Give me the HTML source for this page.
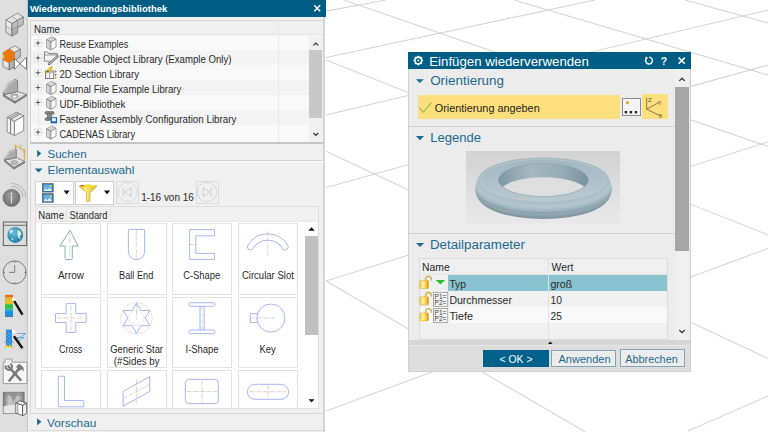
<!DOCTYPE html>
<html><head><meta charset="utf-8">
<style>
*{box-sizing:border-box;margin:0;padding:0}
html,body{width:768px;height:432px;overflow:hidden;background:#fff;font-family:"Liberation Sans",sans-serif;color:#333}
.a{position:absolute}
svg{position:absolute;left:0;top:0}
text{font-family:"Liberation Sans",sans-serif}
</style></head><body>
<!-- background grid -->
<svg width="768" height="432">
<g stroke="#d6d6d6" stroke-width="1.1" fill="none">
<line x1="326" y1="11.1" x2="386" y2="0"/>
<line x1="326" y1="57.5" x2="595" y2="0"/>
<line x1="326" y1="115" x2="768" y2="10"/>
<line x1="326" y1="187.5" x2="768" y2="65"/>
<line x1="326" y1="281" x2="768" y2="142"/>
<line x1="326" y1="411" x2="768" y2="248.5"/>
<line x1="688" y1="431" x2="768" y2="396"/>
<line x1="685" y1="0" x2="768" y2="23"/>
<line x1="514" y1="0" x2="768" y2="75"/>
<line x1="344" y1="0" x2="768" y2="146.5"/>
<line x1="326" y1="60" x2="768" y2="234.8"/>
<line x1="326" y1="151.2" x2="768" y2="358.6"/>
<line x1="326" y1="281" x2="585.5" y2="432"/>
</g></svg>

<!-- left toolbar -->
<div class="a" style="left:0;top:0;width:28px;height:432px;background:#dedede;border-right:1px solid #c6c6c6"></div>

<!-- TOOLBAR ICONS -->
<svg width="30" height="432">
<defs>
<linearGradient id="gface" x1="0" y1="0" x2="0" y2="1"><stop offset="0" stop-color="#f4f4f4"/><stop offset="1" stop-color="#d4d4d4"/></linearGradient>
<linearGradient id="gside" x1="0" y1="0" x2="0" y2="1"><stop offset="0" stop-color="#c8c8c8"/><stop offset="1" stop-color="#a8a8a8"/></linearGradient>
<radialGradient id="ginfo" cx="0.45" cy="0.4" r="0.6"><stop offset="0" stop-color="#a0a0a0"/><stop offset="1" stop-color="#6e6e6e"/></radialGradient>
<radialGradient id="gglobe" cx="0.4" cy="0.35" r="0.7"><stop offset="0" stop-color="#6cc0dc"/><stop offset="1" stop-color="#1f7a9c"/></radialGradient>
<linearGradient id="gstudio" x1="0" y1="0" x2="1" y2="0"><stop offset="0" stop-color="#7a7a7a"/><stop offset="0.3" stop-color="#c8c8c8"/><stop offset="0.5" stop-color="#b8b8b8"/><stop offset="0.7" stop-color="#c8c8c8"/><stop offset="1" stop-color="#7a7a7a"/></linearGradient>
</defs>
<g stroke="#6a6a6a" stroke-width="0.7" stroke-linejoin="round">
<!-- icon1 L blocks -->
<path d="M5.9 19.9 L17.4 13.2 L23.3 16.9 L11.9 23.6 Z" fill="#e6e6e6"/>
<path d="M5.9 19.9 L11.9 23.6 V36.1 L5.9 32.4 Z" fill="url(#gface)"/>
<path d="M11.9 23.6 L23.3 16.9 V24.4 L17.6 27.7 V32.8 L11.9 36.1 Z" fill="url(#gside)"/>
<path d="M11.6 16.6 L17.6 20.3 V27.7 M5.9 26.2 L11.9 29.9 L17.6 26.6" fill="none" stroke="#7a7a7a" stroke-width="0.55"/>
<!-- icon2 -->
<path d="M9 49 L14.6 45.7 L20.3 49.2 L14.6 52.6 Z" fill="#e6e6e6"/>
<path d="M14.6 52.6 L20.3 49.2 V57 L14.6 60.4 V67 L9 70 V62.5 Z" fill="url(#gside)"/>
<path d="M3 59.5 L9 62.5 V69.8 L3 66.5 Z" fill="url(#gface)"/>
<path d="M3 52.5 L9 49 L14.6 52.5 V59.5 L9 62.7 L3 59.5 Z" fill="#e87810" stroke="#d87010" stroke-width="0.5"/>
<path d="M3.8 55 V58" stroke="#f8e020" stroke-width="1"/>
<path d="M14.3 58.6 L26.5 69.4 V57.2 L14.3 69.4 Z" fill="#fff" stroke="#555" stroke-width="0.8"/>
<!-- icon3 bracket -->
<path d="M3.3 94.8 L17.6 91.6 L26.5 94.4 L15 101.6 Z" fill="#e2e2e2"/>
<path d="M3.3 94.8 V96.3 L15 103.2 V101.6 Z M15 101.6 V103.2 L26.5 96 V94.4 Z" fill="#9a9a9a"/>
<path d="M3.3 94.8 L3.3 92.2 L8.4 83.4 L15.3 79.2 L17.6 80.6 V91.6 Z" fill="#acacac"/>
<path d="M3.8 92 L8.6 84 L14.6 80.3" fill="none" stroke="#e8e8e8" stroke-width="0.9"/>
<ellipse cx="14.6" cy="96.2" rx="3.6" ry="2.1" fill="#c0c0c0" stroke="#7a7a7a" stroke-width="0.6"/>
<ellipse cx="14.6" cy="96.9" rx="2" ry="1.1" fill="#eeeeee" stroke="none"/>
<!-- icon4 books -->
<path d="M7.2 117.3 L16.3 112.1 L23.7 115.8 L14.4 121.4 Z" fill="#e8e8e8"/>
<path d="M7.2 117.3 L14.4 121.4 V135.4 L7.2 132 Z" fill="#f2f2f2"/>
<path d="M14.4 121.4 L23.7 115.8 V130.6 L14.4 135.4 Z" fill="#fafafa"/>
<path d="M10.6 119.4 V133.8 M10.6 119.4 L19.8 114 M8.9 118.3 L18 113" fill="none" stroke="#6a6a6a" stroke-width="0.9"/>
<!-- icon5 bracket + dims -->
<path d="M4.5 160.2 L16.3 157.6 L24.6 161.4 L14 167.6 Z" fill="#e2e2e2"/>
<path d="M4.5 160.2 V161.6 L14 169.1 V167.6 Z M14 167.6 V169.1 L24.6 162.9 V161.4 Z" fill="#9a9a9a"/>
<path d="M4.5 160.2 V158.4 L9.8 151 L15.5 148.9 L16.3 149.4 V157.6 Z" fill="#acacac"/>
<path d="M5 158.2 L10 151.4 L15 149.5" fill="none" stroke="#e8e8e8" stroke-width="0.9"/>
<ellipse cx="14.4" cy="162.6" rx="3.4" ry="1.9" fill="#c0c0c0" stroke="#7a7a7a" stroke-width="0.6"/>
</g>
<g stroke="#e0a020" stroke-width="0.9" fill="none">
<path d="M15.5 145 V149 M15.5 146.2 L24.3 150.2 M24.3 149.5 V160.5"/>
<path d="M14.5 144.5 L16.5 146.5 M16.5 144.5 L14.5 146.5 M19.5 145.2 L21.5 147.2 M21.5 145.2 L19.5 147.2 M23.2 150.5 L25.2 152.5 M25.2 150.5 L23.2 152.5" stroke-width="0.7"/>
</g>
<!-- icon6 info -->
<circle cx="11.5" cy="197.8" r="8.6" fill="url(#ginfo)" stroke="#666" stroke-width="0.5"/>
<circle cx="11.5" cy="193.4" r="0.9" fill="#eee"/>
<path d="M11.5 195.6 V203.6" stroke="#e4e4e4" stroke-width="1.1"/>
<path d="M11.6 186.2 A11.6 11.6 0 0 1 23.1 197.2 M11.6 183.3 A14.5 14.5 0 0 1 26 197.5" fill="none" stroke="#a4a4a4" stroke-width="0.8"/>
<!-- icon7 globe window -->
<rect x="3.3" y="222" width="23.4" height="23.6" fill="#dcdcdc" stroke="#555" stroke-width="0.9"/>
<path d="M3.3 225.3 H26.7" stroke="#555" stroke-width="0.8"/>
<circle cx="15.2" cy="235" r="7.9" fill="url(#gglobe)"/>
<path d="M9.5 231 L12 229.5 L13 231 L10.5 234 Z M17.5 230 L20.5 231.5 L21.5 234.5 L19.5 236 L21 239 L18.5 238 L17.5 235 Z M11 238 L13.5 239 L12.5 240.5 Z" fill="#fff" opacity="0.85"/>
<!-- icon8 clock -->
<circle cx="14.7" cy="272.4" r="11.5" fill="none" stroke="#707070" stroke-width="0.9"/>
<path d="M14.7 260.9 V262.8 M14.7 282 V283.9 M3.2 272.4 H5.1 M24.3 272.4 H26.2 M14.7 265 V272.4 H9.3" fill="none" stroke="#707070" stroke-width="0.9"/>
<!-- icon9 color bar -->
<rect x="5" y="294.8" width="8" height="3" fill="#e87020"/>
<rect x="5" y="297.6" width="8" height="6.6" fill="#e8c020"/>
<rect x="5" y="304.2" width="8" height="4.4" fill="#30c040"/>
<rect x="5" y="308.6" width="8" height="2.2" fill="#20b098"/>
<rect x="5" y="310.8" width="8" height="4.6" fill="#1a90e0"/>
<rect x="5" y="315.4" width="8" height="1.4" fill="#1060a0"/>
<path d="M14.5 301.5 L22.3 314.3" stroke="#111" stroke-width="2.4" stroke-linecap="round"/>
<circle cx="13.6" cy="299.4" r="1.8" fill="#fff" opacity="0.9"/>
<circle cx="22.8" cy="315" r="0.8" fill="#fff"/>
<!-- icon10 -->
<path d="M17 333.5 H26 M16.5 337.5 H24 L17 342 M26 333.5 L17 339" stroke="#4aa0e0" stroke-width="0.8" fill="none"/>
<path d="M4 343 L6 341 M12 341 L14 343" stroke="#4aa0e0" stroke-width="0.8"/>
<rect x="5.9" y="329.6" width="6" height="16.6" fill="#2a88dd"/>
<path d="M6.5 331 L11 335 M6.5 334.5 L11 338.5 M6.5 338 L11 342 M6.5 341.5 L11 345.5" stroke="#8cc4f0" stroke-width="0.6"/>
<path d="M5 347.8 L6.5 345.5 L8.5 347 L10 345.5 L12 347.5 L13 346" stroke="#e8c820" stroke-width="1.3" fill="none"/>
<path d="M14.5 337 L22.3 348" stroke="#111" stroke-width="2.4" stroke-linecap="round"/>
<circle cx="13.6" cy="331.5" r="1.8" fill="#fff" opacity="0.9"/>
<circle cx="22.7" cy="348.5" r="0.8" fill="#fff"/>
<!-- icon11 tools -->
<path d="M3.2 383.6 V362.3 H5.2 V359.1 H11.9 V362.3 H27 V383.6 Z" fill="#f6f6f6" stroke="#8a8a8a" stroke-width="0.8"/>
<path d="M8.5 366.5 L20.5 379.8" stroke="#7a7a7a" stroke-width="2.6" stroke-linecap="round"/>
<path d="M5.8 365.5 A3.2 3.2 0 1 0 10.2 363.8" fill="none" stroke="#7a7a7a" stroke-width="1.8"/>
<path d="M9.5 380.5 L19 368.5" stroke="#7a7a7a" stroke-width="2.6" stroke-linecap="round"/>
<path d="M16 366.8 L19.3 363.8 L23.5 367.5 L23.8 371.5 L21.8 369.3 L19.5 371 Z" fill="#7a7a7a"/>
<!-- icon12 studio -->
<rect x="3.2" y="392.2" width="20.9" height="21.4" fill="url(#gstudio)" stroke="#6a6a6a" stroke-width="0.7"/>
<path d="M3.6 392.6 H23.7 V396 H3.6 Z" fill="#808080" opacity="0.45"/>
<path d="M8.5 392.6 L13.6 401.5 L18.8 392.6 Z" fill="#8c8c8c" opacity="0.75"/>
<path d="M3.6 406.5 Q8 404.5 13.6 404.8 Q19 404.5 23.7 406.5 V413.2 H3.6 Z" fill="#e6e6e6"/>
<path d="M15.8 402.8 L19.8 400.8 L26.7 403.2 L22.6 405.4 Z" fill="#f4f4f4" stroke="#444" stroke-width="0.75" stroke-linejoin="round"/>
<path d="M15.8 402.8 L22.6 405.4 V415.6 L15.8 413 Z" fill="#fdfdfd" stroke="#444" stroke-width="0.75" stroke-linejoin="round"/>
<path d="M22.6 405.4 L26.7 403.2 V413.4 L22.6 415.6 Z" fill="#f0f0f0" stroke="#444" stroke-width="0.75" stroke-linejoin="round"/>
<path d="M17.8 403.6 V413.8" stroke="#555" stroke-width="0.6"/>
</svg>

<!-- /TOOLBAR ICONS -->
<!-- left panel -->
<div class="a" style="left:28px;top:0;width:297px;height:432px;background:#f0f0f0;border-right:2px solid #d4d4d4"></div>
<div class="a" style="left:28px;top:0;width:298px;height:17.4px;background:#005e85"></div>

<!-- tree -->
<div class="a" style="left:30px;top:19.8px;width:294px;height:124.4px;background:#f9f9f9;border:1px solid #d4d4d4;border-bottom:2.2px solid #c4c4c4"></div>
<div class="a" style="left:31px;top:20.8px;width:292px;height:14.7px;background:#efefef;border-bottom:1px solid #e2e2e2"></div>
<div class="a" style="left:31px;top:50.4px;width:278px;height:14.86px;background:#f3f3f3"></div>
<div class="a" style="left:31px;top:80.1px;width:278px;height:14.86px;background:#f3f3f3"></div>
<div class="a" style="left:31px;top:109.8px;width:278px;height:14.86px;background:#f3f3f3"></div>
<div class="a" style="left:278px;top:20px;width:1px;height:122px;background:#e8e8e8"></div>
<!-- tree scrollbar -->
<div class="a" style="left:309px;top:35.5px;width:14px;height:106px;background:#f0f0f0"></div>
<div class="a" style="left:309.2px;top:50px;width:13px;height:67.6px;background:#c8c8c8"></div>

<!-- sections -->
<div class="a" style="left:30px;top:160px;width:294px;height:1px;background:#d2d2d2"></div>
<div class="a" style="left:30px;top:161px;width:294px;height:1px;background:#fafafa"></div>
<div class="a" style="left:30px;top:160px;width:1px;height:253px;background:#d8d8d8"></div>

<!-- toolbar buttons -->
<div class="a" style="left:35px;top:181px;width:39px;height:23.5px;background:#fff;border:1px solid #cfcfcf"></div>
<div class="a" style="left:75px;top:181px;width:39px;height:23.5px;background:#fff;border:1px solid #cfcfcf"></div>
<div class="a" style="left:116px;top:181px;width:23px;height:22.5px;border:1px solid #dcdcdc"></div>
<div class="a" style="left:195.5px;top:181px;width:23px;height:22.5px;border:1px solid #dcdcdc"></div>

<!-- list -->
<div class="a" style="left:35px;top:206px;width:284px;height:203px;background:#fff;border:1px solid #dedede"></div>
<div class="a" style="left:36px;top:207px;width:282px;height:14.5px;background:#f0f0f0;border-bottom:1px solid #e6e6e6"></div>
<div class="a" style="left:66px;top:207px;width:1px;height:14px;background:#e2e2e2"></div>
<div class="a" style="left:109.5px;top:207px;width:1px;height:14px;background:#e2e2e2"></div>
<!-- tiles -->
<div class="a" style="left:41px;top:223px;width:60px;height:71.5px;border:1px solid #e2e2e2"></div>
<div class="a" style="left:106.5px;top:223px;width:60px;height:71.5px;border:1px solid #e2e2e2"></div>
<div class="a" style="left:172px;top:223px;width:60px;height:71.5px;border:1px solid #e2e2e2"></div>
<div class="a" style="left:238px;top:223px;width:60px;height:71.5px;border:1px solid #e2e2e2"></div>
<div class="a" style="left:41px;top:296.5px;width:60px;height:71.5px;border:1px solid #e2e2e2"></div>
<div class="a" style="left:106.5px;top:296.5px;width:60px;height:71.5px;border:1px solid #e2e2e2"></div>
<div class="a" style="left:172px;top:296.5px;width:60px;height:71.5px;border:1px solid #e2e2e2"></div>
<div class="a" style="left:238px;top:296.5px;width:60px;height:71.5px;border:1px solid #e2e2e2"></div>
<div class="a" style="left:41px;top:370px;width:60px;height:38px;border:1px solid #e2e2e2;border-bottom:none"></div>
<div class="a" style="left:106.5px;top:370px;width:60px;height:38px;border:1px solid #e2e2e2;border-bottom:none"></div>
<div class="a" style="left:172px;top:370px;width:60px;height:38px;border:1px solid #e2e2e2;border-bottom:none"></div>
<div class="a" style="left:238px;top:370px;width:60px;height:38px;border:1px solid #e2e2e2;border-bottom:none"></div>
<!-- list scrollbar -->
<div class="a" style="left:305.3px;top:236px;width:12.3px;height:99px;background:#c0c0c0"></div>

<div class="a" style="left:30px;top:412.5px;width:294px;height:1px;background:#d8d8d8"></div>
<div class="a" style="left:30px;top:429.5px;width:294px;height:1px;background:#d8d8d8"></div>

<!-- dialog -->
<div class="a" style="left:408px;top:52px;width:283px;height:320px;background:#ececec;border:1px solid #d0d0d0"></div>
<div class="a" style="left:408px;top:51.6px;width:283px;height:17.4px;background:#005e85"></div>
<!-- orientierung yellow -->
<div class="a" style="left:418px;top:94.6px;width:202px;height:24.7px;background:#fde07c"></div>
<div class="a" style="left:622px;top:97.8px;width:18.5px;height:18.5px;background:#f4f4f4;border:1px solid #8a8a8a"></div>
<div class="a" style="left:642px;top:94.2px;width:25.5px;height:25.2px;background:#fde07c"></div>
<div class="a" style="left:409px;top:125.6px;width:266px;height:1.2px;background:#d0d0d0"></div>
<!-- legend image -->
<div class="a" style="left:466px;top:151px;width:154px;height:72.5px;background:linear-gradient(#d2d2d2,#e9e9e9)"></div>
<div class="a" style="left:409px;top:232.5px;width:266px;height:1.2px;background:#d0d0d0"></div>
<!-- table -->
<div class="a" style="left:418.5px;top:257.6px;width:249px;height:82px;background:#f0f0f0;border:1px solid #dcdcdc"></div>
<div class="a" style="left:419.5px;top:258.6px;width:247px;height:16px;background:#efefef;border-bottom:1px solid #e4e4e4"></div>
<div class="a" style="left:448px;top:274.5px;width:219px;height:16.2px;background:#89c3d0"></div>
<div class="a" style="left:419.5px;top:307px;width:247px;height:16.2px;background:#f8f8f8"></div>
<div class="a" style="left:548px;top:258.6px;width:1px;height:80px;background:#e2e2e2"></div>
<!-- dialog scrollbar -->
<div class="a" style="left:674.6px;top:69px;width:14.5px;height:271px;background:#f0f0f0"></div>
<div class="a" style="left:674.6px;top:86.8px;width:14.3px;height:164px;background:#a6a6a6"></div>
<!-- footer -->
<div class="a" style="left:409px;top:339.5px;width:281px;height:5.2px;background:#d6d6d6"></div>
<div class="a" style="left:409px;top:344.7px;width:281px;height:26.5px;background:#dddddd;border-top:1px solid #e6e6e6"></div>
<div class="a" style="left:483.2px;top:349.7px;width:65.5px;height:17.6px;background:#00618a"></div>
<div class="a" style="left:551px;top:349.5px;width:65px;height:17.8px;background:#ececec;border:1px solid #82a6b6"></div>
<div class="a" style="left:619.7px;top:349.3px;width:65px;height:18px;background:#ececec;border:1px solid #82a6b6"></div>

<!-- TREE ICONS -->
<svg width="768" height="432">
<defs>
<symbol id="book" overflow="visible"><g fill="#fbfbfb" stroke="#6e6e6e" stroke-width="0.65" stroke-linejoin="round">
<path d="M0.6 3.8 L5.6 0.8 L10 3 L5 6 Z"/>
<path d="M0.6 3.8 V11.6 L5 13.9 V6 Z"/>
<path d="M5 6 L10 3 V11 L5 13.9 Z"/>
<path d="M2.1 4.6 V12.4 M3.5 5.3 V13.1 M2.1 4.6 L7 1.7 M3.5 5.3 L8.4 2.3" fill="none" stroke="#8c8c8c" stroke-width="0.55"/>
</g></symbol>
</defs>
<line x1="38.5" y1="36" x2="38.5" y2="140" stroke="#e4e4e4" stroke-width="0.8"/>
<rect x="34.6" y="39.60" width="6.8" height="6.8" fill="#fcfcfc" stroke="#dcdcdc" stroke-width="0.7"/>
<path d="M35.6 43.00 H40.4 M38 40.60 V45.40" stroke="#3a3a3a" stroke-width="0.8"/>
<path d="M41.5 43.00 H44" stroke="#e0e0e0" stroke-width="0.8"/>
<use href="#book" x="46" y="36.00"/>
<rect x="34.6" y="54.46" width="6.8" height="6.8" fill="#fcfcfc" stroke="#dcdcdc" stroke-width="0.7"/>
<path d="M35.6 57.86 H40.4 M38 55.46 V60.26" stroke="#3a3a3a" stroke-width="0.8"/>
<path d="M41.5 57.86 H44" stroke="#e0e0e0" stroke-width="0.8"/>
<rect x="34.6" y="69.32" width="6.8" height="6.8" fill="#fcfcfc" stroke="#dcdcdc" stroke-width="0.7"/>
<path d="M35.6 72.72 H40.4 M38 70.32 V75.12" stroke="#3a3a3a" stroke-width="0.8"/>
<path d="M41.5 72.72 H44" stroke="#e0e0e0" stroke-width="0.8"/>
<rect x="34.6" y="84.18" width="6.8" height="6.8" fill="#fcfcfc" stroke="#dcdcdc" stroke-width="0.7"/>
<path d="M35.6 87.58 H40.4 M38 85.18 V89.98" stroke="#3a3a3a" stroke-width="0.8"/>
<path d="M41.5 87.58 H44" stroke="#e0e0e0" stroke-width="0.8"/>
<use href="#book" x="46" y="80.58"/>
<rect x="34.6" y="99.04" width="6.8" height="6.8" fill="#fcfcfc" stroke="#dcdcdc" stroke-width="0.7"/>
<path d="M35.6 102.44 H40.4 M38 100.04 V104.84" stroke="#3a3a3a" stroke-width="0.8"/>
<path d="M41.5 102.44 H44" stroke="#e0e0e0" stroke-width="0.8"/>
<use href="#book" x="46" y="95.44"/>
<rect x="34.6" y="128.76" width="6.8" height="6.8" fill="#fcfcfc" stroke="#dcdcdc" stroke-width="0.7"/>
<path d="M35.6 132.16 H40.4 M38 129.76 V134.56" stroke="#3a3a3a" stroke-width="0.8"/>
<path d="M41.5 132.16 H44" stroke="#e0e0e0" stroke-width="0.8"/>
<use href="#book" x="46" y="125.16"/>
<g fill="none" stroke="#707070" stroke-width="0.8" stroke-linejoin="round">
<path d="M44.4 61.2 V52 H47.6 L48.7 53.4 H57.2 V58"/>
<path d="M44.4 54.9 H57 M44.4 61.2 H50"/>
</g>
<path d="M57.6 56.3 L49 64" stroke="#6a6a6a" stroke-width="2.4" stroke-linecap="round"/>
<path d="M57.6 56.3 L49 64" stroke="#e8e8e8" stroke-width="1" />
<rect x="45.5" y="71" width="8.3" height="7.6" fill="#f6f6f6" stroke="#6a6a6a" stroke-width="0.9"/>
<path d="M49.6 72.5 V78.6 M45.5 72.8 H53.8" stroke="#8a8a8a" stroke-width="0.7"/>
<path d="M47.3 71.8 L51.6 67.6" stroke="#e8c020" stroke-width="2.8" stroke-linecap="round"/>
<path d="M47.3 71.8 L48.3 70.8" stroke="#444" stroke-width="1.6"/>
<path d="M55.7 70.6 V78.6" stroke="#b06a20" stroke-width="1.3" stroke-dasharray="2 1.3"/>
<g fill="#8a8a8a" stroke="#555" stroke-width="0.6">
<rect x="45" y="111.6" width="9" height="2.6" rx="1.2"/>
<rect x="47.6" y="113.5" width="3.8" height="6.5"/>
<rect x="45" y="117.8" width="5" height="2.6" rx="1.2"/>
</g>
<rect x="50.6" y="117.2" width="6.5" height="6.2" fill="#1a6fb0"/>
<rect x="52" y="118.2" width="3.8" height="3" fill="#fff"/>
</svg>
<!-- PANEL ICONS -->
<svg width="768" height="432">
<!-- title close -->
<path d="M314.3 5.3 L320.1 11.3 M320.1 5.3 L314.3 11.3" stroke="#fff" stroke-width="1.45"/>
<!-- tree scrollbar arrows -->
<path d="M313.4 45.4 L315.8 43 L318.2 45.4" fill="none" stroke="#333" stroke-width="1.2"/>
<path d="M313.4 133 L315.8 135.4 L318.2 133" fill="none" stroke="#333" stroke-width="1.2"/>
<!-- section triangles -->
<path d="M37.2 149.9 L41.3 153.5 L37.2 157.1 Z" fill="#1b6a91"/>
<path d="M34.6 168.5 H42.6 L38.6 172.6 Z" fill="#1b6a91"/>
<path d="M37.1 418.2 L41.4 421.8 L37.1 425.4 Z" fill="#1b6a91"/>
<!-- button1 icon: two images -->
<g>
<rect x="42.4" y="183.5" width="10.8" height="8.6" fill="#2a6ea8" stroke="#444" stroke-width="0.5"/>
<rect x="43.4" y="184.5" width="8.8" height="6.6" fill="#6ab0e0"/>
<path d="M43.4 191.1 L45.5 188.5 L47.5 190 L49.5 187.8 L52.2 191.1 Z" fill="#e8f0f8"/>
<circle cx="51" cy="185.8" r="0.9" fill="#f8d020"/>
<rect x="42.4" y="193.7" width="10.8" height="8.6" fill="#2a6ea8" stroke="#444" stroke-width="0.5"/>
<rect x="43.4" y="194.7" width="8.8" height="6.6" fill="#6ab0e0"/>
<path d="M43.4 201.3 L45.5 198.7 L47.5 200.2 L49.5 198 L52.2 201.3 Z" fill="#e8f0f8"/>
<circle cx="51" cy="196" r="0.9" fill="#f8d020"/>
</g>
<path d="M63.6 190.6 H69.7 L66.65 194.4 Z" fill="#111"/>
<!-- funnel -->
<defs><linearGradient id="gfun" x1="0" y1="0" x2="1" y2="0"><stop offset="0" stop-color="#c8a010"/><stop offset="0.35" stop-color="#fff080"/><stop offset="1" stop-color="#d8b020"/></linearGradient></defs>
<path d="M79 186 Q88 184 97 186 L90 193 V201.2 L86.5 201.7 V193 Z" fill="url(#gfun)" stroke="#b89010" stroke-width="0.5"/>
<ellipse cx="88" cy="186.2" rx="8.3" ry="1.6" fill="#f4dc40"/>
<path d="M80.5 186 Q82 185 84 185.8" stroke="#d04010" stroke-width="1"/>
<path d="M104 190.6 H110.1 L107.05 194.4 Z" fill="#111"/>
<!-- nav buttons -->
<circle cx="127.6" cy="192.1" r="9.7" fill="none" stroke="#d4d4d4" stroke-width="0.9"/>
<path d="M123.3 187.8 V196.6 M131.2 187.6 L124.6 192.1 L131.2 196.6 Z" fill="none" stroke="#c8c8c8" stroke-width="0.9"/>
<circle cx="207" cy="192.1" r="9.7" fill="none" stroke="#d4d4d4" stroke-width="0.9"/>
<path d="M211.3 187.8 V196.6 M203.4 187.6 L210 192.1 L203.4 196.6 Z" fill="none" stroke="#c8c8c8" stroke-width="0.9"/>
<!-- list scrollbar arrows -->
<path d="M308.3 230.8 L311.5 227.3 L314.8 230.8 Z" fill="#111"/>
<path d="M308.5 399.3 L311.5 402.6 L314.5 399.3 Z" fill="#111"/>
<!-- tile icons -->

<circle cx="136.5" cy="318.1" r="15.6" fill="none" stroke="#b8b0a8" stroke-width="0.6" stroke-dasharray="1.5 1"/>
<circle cx="136.5" cy="318.1" r="7.5" fill="none" stroke="#b8b0a8" stroke-width="0.5" stroke-dasharray="1.5 1"/>
<path d="M71.3 230.2 L61.2 246.1 H66.4 V258.5 Q66.4 259.5 67.4 259.5 H72.6 Q73.6 259.5 73.6 258.5 V246.1 H79.5 Z" fill="none" stroke="#78acb0" stroke-width="0.9" stroke-linejoin="round" transform="translate(-1.3 0)"/>
<g fill="none" stroke="#9aa8f2" stroke-width="0.85" stroke-linejoin="round">
<path d="M128.4 230 Q128.4 229.4 129 229.4 H144 Q144.6 229.4 144.6 230 V251.6 A8.1 8.1 0 0 1 128.4 251.6 Z"/>
<path d="M189.6 229.6 H214.6 V235.8 H195.8 V253.4 H214.6 V259.4 H189.6 Z"/>
<path d="M250.6 246.8 A20 20 0 0 1 285 246.8" stroke="#9aa8f2" stroke-width="6.9" stroke-linecap="round"/>
<path d="M250.6 246.8 A20 20 0 0 1 285 246.8" stroke="#fff" stroke-width="5.4" stroke-linecap="round"/>
<path d="M66.2 303.6 H75.8 V313.6 H86.2 V322.5 H75.8 V332.4 H66.2 V322.5 H55.5 V313.6 H66.2 Z"/>
<path d="M136.50 302.90 L140.89 310.50 L149.66 310.50 L145.28 318.10 L149.66 325.70 L140.89 325.70 L136.50 333.30 L132.11 325.70 L123.34 325.70 L127.72 318.10 L123.34 310.50 L132.11 310.50 Z"/>
<rect x="189" y="302.7" width="25.8" height="3.6" rx="1.5"/>
<rect x="189" y="330" width="25.8" height="3.6" rx="1.5"/>
<path d="M200 306.3 V330 M204.2 306.3 V330"/>
<path d="M257.8 313.6 H250.2 V322.5 H257.8"/>
<circle cx="270.9" cy="318" r="14"/>
<path d="M58.4 376.2 H64.5 V400.6 H83.8 V406.8 H58.4 Z"/>
<path d="M123.1 391.4 L149.7 376.6 V391.4 L123.1 406.3 Z"/>
<rect x="185.3" y="379.4" width="33" height="24.2" rx="3.5"/>
<rect x="247.4" y="384.3" width="41.2" height="15" rx="7.5"/>
</g>
<g fill="none" stroke="#c4b49c" stroke-width="0.6" stroke-dasharray="4 1 0.8 1">
<path d="M69.8 232 V259"/>
<path d="M136.3 229.5 V259.5"/>
<path d="M189.5 244.5 H195.5"/>
<path d="M267.8 231.5 V256"/>
<path d="M71 306 V331 M57 318 H85"/>
<path d="M136.5 304 V319"/>
<path d="M202 306 V331"/>
<path d="M250.5 318 H275"/>
<path d="M123.5 398.5 L149.5 384.5 M136.4 380 V403"/>
<path d="M187 391.5 H217 M202 381 V403"/>
<path d="M250 391.7 H286 M268 385 V399"/>
</g>
</svg>

<!-- /PANEL ICONS -->
<!-- DIALOG ICONS -->
<svg width="768" height="432">
<defs>
<linearGradient id="glock" x1="0" y1="0" x2="1" y2="0"><stop offset="0" stop-color="#f0d050"/><stop offset="0.4" stop-color="#fff4a0"/><stop offset="0.8" stop-color="#f0c030"/><stop offset="1" stop-color="#e07818"/></linearGradient>
<symbol id="lock" overflow="visible">
<path d="M5.9 5.2 V3.6 A2.9 2.9 0 0 1 11.7 3.6 V4.8" fill="none" stroke="#d8a848" stroke-width="1.3"/>
<rect x="0" y="5" width="8.8" height="7.9" rx="0.8" fill="url(#glock)" stroke="#d8a030" stroke-width="0.5"/>
</symbol>
<symbol id="pp" overflow="visible">
<rect x="0.3" y="0.3" width="14.4" height="14" fill="#f4f4f4" stroke="#8a8a8a" stroke-width="0.7"/>
<text x="1.4" y="6.6" font-size="6.6" fill="#3a3a3a">P1=</text>
<text x="1.4" y="13" font-size="6.6" fill="#3a3a3a">P2=</text>
</symbol>
<radialGradient id="gring" cx="0.5" cy="0.3" r="0.75"><stop offset="0" stop-color="#b8cad3"/><stop offset="1" stop-color="#94aab5"/></radialGradient>
</defs>
<!-- gear -->
<g transform="translate(418.3 60.5)">
<circle r="3.4" fill="none" stroke="#fff" stroke-width="1.6"/>
<g stroke="#fff" stroke-width="1.6">
<path d="M0 -4.8 V-3.6 M0 4.8 V3.6 M-4.8 0 H-3.6 M4.8 0 H3.6 M-3.4 -3.4 L-2.6 -2.6 M3.4 3.4 L2.6 2.6 M-3.4 3.4 L-2.6 2.6 M3.4 -3.4 L2.6 -2.6"/>
</g>
<circle r="1" fill="#fff"/>
</g>
<!-- reset ? x -->
<path d="M646.5 58.3 A3.4 3.4 0 1 0 649.2 57.2" fill="none" stroke="#e4eef4" stroke-width="1.6"/>
<path d="M645.2 56.6 L648 57.4 L646.3 59.8 Z" fill="#e4eef4"/>
<text x="660.7" y="64.6" font-size="10.5" font-weight="bold" fill="#f0f6f8">?</text>
<path d="M678.6 57.6 L684.8 63.8 M684.8 57.6 L678.6 63.8" stroke="#fff" stroke-width="1.5"/>
<!-- scroll arrows -->
<path d="M679.3 80.9 L682 78.2 L684.7 80.9" fill="none" stroke="#333" stroke-width="1.3"/>
<path d="M679.3 330 L682 332.7 L684.7 330" fill="none" stroke="#333" stroke-width="1.3"/>
<!-- section triangles -->
<path d="M415.9 79.3 H423.8 L419.85 83 Z" fill="#1b6a91"/>
<path d="M415.9 136.1 H424 L419.95 140.2 Z" fill="#1b6a91"/>
<path d="M416 243 H424.2 L420.1 247 Z" fill="#1b6a91"/>
<!-- check -->
<path d="M419.4 107.6 L423.3 112.4 L431.6 102.4" fill="none" stroke="#98c040" stroke-width="1.1"/>
<!-- dots button -->
<circle cx="627.4" cy="102.6" r="1.6" fill="#d8a830"/>
<rect x="624.7" y="111" width="2.4" height="2.4" fill="#222"/>
<rect x="629.7" y="111" width="2.4" height="2.4" fill="#222"/>
<rect x="634.7" y="111" width="2.4" height="2.4" fill="#222"/>
<!-- axes -->
<path d="M646.7 97.5 V109.3 L659.3 102.2 M646.7 109.3 L660.8 116" fill="none" stroke="#6a6040" stroke-width="0.8"/>
<text x="648" y="101.8" font-size="6" fill="#5a5030">Z</text>
<text x="657.8" y="104.6" font-size="6" fill="#5a5030">Y</text>
<text x="658.6" y="118.4" font-size="6" fill="#5a5030">X</text>
<!-- ring image -->
<defs>
<linearGradient id="gtop" x1="0" y1="0" x2="0" y2="1"><stop offset="0" stop-color="#a3b7c1"/><stop offset="0.55" stop-color="#aec0c9"/><stop offset="1" stop-color="#b9c9d1"/></linearGradient>
<linearGradient id="gsidee" x1="0" y1="0" x2="1" y2="0"><stop offset="0" stop-color="#8097a2"/><stop offset="0.5" stop-color="#9cb0ba"/><stop offset="1" stop-color="#8399a4"/></linearGradient>
<linearGradient id="gwall" x1="0" y1="0" x2="1" y2="0"><stop offset="0" stop-color="#7e95a0"/><stop offset="0.35" stop-color="#a6b9c2"/><stop offset="0.7" stop-color="#97acb6"/><stop offset="1" stop-color="#7a919c"/></linearGradient>
<clipPath id="chole"><ellipse cx="543.4" cy="180" rx="45" ry="16.6"/></clipPath>
</defs>
<g>
<ellipse cx="543.5" cy="195.6" rx="65.5" ry="23.40" fill="#7f96a1"/>
<ellipse cx="543.5" cy="194.1" rx="66.8" ry="23.53" fill="#869ca7"/>
<ellipse cx="543.5" cy="192.6" rx="67.5" ry="23.60" fill="#8ea3ad"/>
<ellipse cx="543.5" cy="191.1" rx="67.9" ry="23.64" fill="#93a8b2"/>
<ellipse cx="543.5" cy="189.6" rx="68" ry="23.65" fill="#8aa0aa"/>
<ellipse cx="543.5" cy="188.6" rx="68" ry="23.65" fill="#9db1ba"/>
<ellipse cx="543.5" cy="187.1" rx="67.9" ry="23.64" fill="#a7bac3"/>
<ellipse cx="543.5" cy="185.6" rx="67.6" ry="23.61" fill="#afc1c9"/>
<ellipse cx="543.5" cy="184.1" rx="67.2" ry="23.57" fill="#b3c4cc"/>
<ellipse cx="543.5" cy="182.6" rx="66.6" ry="23.51" fill="#b0c2ca"/>
<ellipse cx="543.5" cy="181.1" rx="65.8" ry="23.43" fill="#abbdc6"/>
<ellipse cx="543.5" cy="179.6" rx="65" ry="22.2" fill="url(#gtop)"/>
<ellipse cx="543.5" cy="179.8" rx="62" ry="20.6" fill="none" stroke="#bccbd2" stroke-width="0.8" opacity="0.8"/>
<ellipse cx="543.4" cy="180" rx="45" ry="16.6" fill="url(#gwall)"/>
<ellipse cx="543.4" cy="193.8" rx="45" ry="16.6" fill="#dedede" clip-path="url(#chole)"/>
<ellipse cx="543.4" cy="180" rx="45" ry="16.6" fill="none" stroke="#8ca2ac" stroke-width="0.6"/>
</g>
<!-- table icons -->
<use href="#lock" x="419.7" y="275.6"/>
<use href="#lock" x="419.7" y="291.8"/>
<use href="#lock" x="419.7" y="308"/>
<path d="M435.6 279.9 H445.2 L440.4 284.6 Z" fill="#2ec02e"/>
<use href="#pp" x="433.1" y="292"/>
<use href="#pp" x="433.1" y="308.2"/>
<!-- footer small triangle -->
<path d="M548 344 L550.3 341.5 L552.6 344 Z" fill="#111"/>
</svg>

<!-- /DIALOG ICONS -->
<!-- TEXT overlay -->
<svg width="768" height="432">
<g fill="#fff" font-weight="bold" font-size="9.8"><text x="30.0" y="12.3" textLength="137.2" lengthAdjust="spacingAndGlyphs">Wiederverwendungsbibliothek</text></g>
<g fill="#2a2a2a" font-size="10">
<text x="34.0" y="32.9" textLength="26.0" lengthAdjust="spacingAndGlyphs">Name</text>
<text x="59.4" y="48.3" textLength="68.8" lengthAdjust="spacingAndGlyphs">Reuse Examples</text>
<text x="59.4" y="63.2" textLength="172.0" lengthAdjust="spacingAndGlyphs">Reusable Object Library (Example Only)</text>
<text x="59.4" y="78.0" textLength="79.6" lengthAdjust="spacingAndGlyphs">2D Section Library</text>
<text x="59.4" y="92.9" textLength="122.0" lengthAdjust="spacingAndGlyphs">Journal File Example Library</text>
<text x="59.4" y="107.7" textLength="66.0" lengthAdjust="spacingAndGlyphs">UDF-Bibliothek</text>
<text x="59.4" y="122.6" textLength="177.0" lengthAdjust="spacingAndGlyphs">Fastener Assembly Configuration Library</text>
<text x="59.4" y="137.5" textLength="75.7" lengthAdjust="spacingAndGlyphs">CADENAS Library</text>
</g>
<g fill="#1b6a91" font-size="11">
<text x="47.5" y="157.8" textLength="39.1" lengthAdjust="spacingAndGlyphs">Suchen</text>
<text x="47.5" y="174.2" textLength="86.8" lengthAdjust="spacingAndGlyphs">Elementauswahl</text>
<text x="47.1" y="426.7" textLength="49.2" lengthAdjust="spacingAndGlyphs">Vorschau</text>
</g>
<g fill="#2a2a2a" font-size="10">
<text x="141.2" y="200.6" textLength="52.6" lengthAdjust="spacingAndGlyphs">1-16 von 16</text>
<text x="38.3" y="218.6" textLength="25.7" lengthAdjust="spacingAndGlyphs">Name</text>
<text x="69.6" y="218.6" textLength="37.8" lengthAdjust="spacingAndGlyphs">Standard</text>
<text x="58.0" y="278.7" textLength="25.9" lengthAdjust="spacingAndGlyphs">Arrow</text>
<text x="119.1" y="278.7" textLength="34.2" lengthAdjust="spacingAndGlyphs">Ball End</text>
<text x="183.2" y="278.7" textLength="36.9" lengthAdjust="spacingAndGlyphs">C-Shape</text>
<text x="241.9" y="278.7" textLength="52.0" lengthAdjust="spacingAndGlyphs">Circular Slot</text>
<text x="59.1" y="352.6" textLength="23.2" lengthAdjust="spacingAndGlyphs">Cross</text>
<text x="110.3" y="352.6" textLength="52.7" lengthAdjust="spacingAndGlyphs">Generic Star</text>
<text x="113.8" y="365.4" textLength="45.7" lengthAdjust="spacingAndGlyphs">(#Sides by</text>
<text x="185.5" y="352.6" textLength="33.1" lengthAdjust="spacingAndGlyphs">I-Shape</text>
<text x="259.4" y="352.6" textLength="16.4" lengthAdjust="spacingAndGlyphs">Key</text>
</g>
<g fill="#fff" font-size="12"><text x="429.3" y="65.9" textLength="159.5" lengthAdjust="spacingAndGlyphs">Einfügen wiederverwenden</text></g>
<g fill="#1b6a91" font-size="12">
<text x="430.2" y="85.2" textLength="73.8" lengthAdjust="spacingAndGlyphs">Orientierung</text>
<text x="430.2" y="142.3" textLength="50.8" lengthAdjust="spacingAndGlyphs">Legende</text>
<text x="429.9" y="248.6" textLength="95.0" lengthAdjust="spacingAndGlyphs">Detailparameter</text>
</g>
<g fill="#1e1e1e" font-size="11"><text x="434.7" y="111.5" textLength="105.0" lengthAdjust="spacingAndGlyphs">Orientierung angeben</text></g>
<g fill="#2a2a2a" font-size="10">
<text x="422.0" y="271.0" textLength="27.7" lengthAdjust="spacingAndGlyphs">Name</text>
<text x="551.5" y="271.2" textLength="21.8" lengthAdjust="spacingAndGlyphs">Wert</text>
<text x="449.4" y="287.5" textLength="16.6" lengthAdjust="spacingAndGlyphs">Typ</text>
<text x="550.4" y="287.5" textLength="21.9" lengthAdjust="spacingAndGlyphs">groß</text>
<text x="449.4" y="303.6" textLength="62.5" lengthAdjust="spacingAndGlyphs">Durchmesser</text>
<text x="550.4" y="303.6" textLength="11.5" lengthAdjust="spacingAndGlyphs">10</text>
<text x="449.4" y="319.8" textLength="23.5" lengthAdjust="spacingAndGlyphs">Tiefe</text>
<text x="550.4" y="319.8" textLength="11.5" lengthAdjust="spacingAndGlyphs">25</text>
</g>
<g font-size="10.5">
<g fill="#fff"><text x="499.5" y="363.1" textLength="33.0" lengthAdjust="spacingAndGlyphs">&lt; OK &gt;</text></g>
<g fill="#1f6a8c"><text x="558.5" y="363.1" textLength="52.0" lengthAdjust="spacingAndGlyphs">Anwenden</text><text x="625.3" y="363.1" textLength="52.4" lengthAdjust="spacingAndGlyphs">Abbrechen</text></g>
</g>
</svg>
</body></html>
